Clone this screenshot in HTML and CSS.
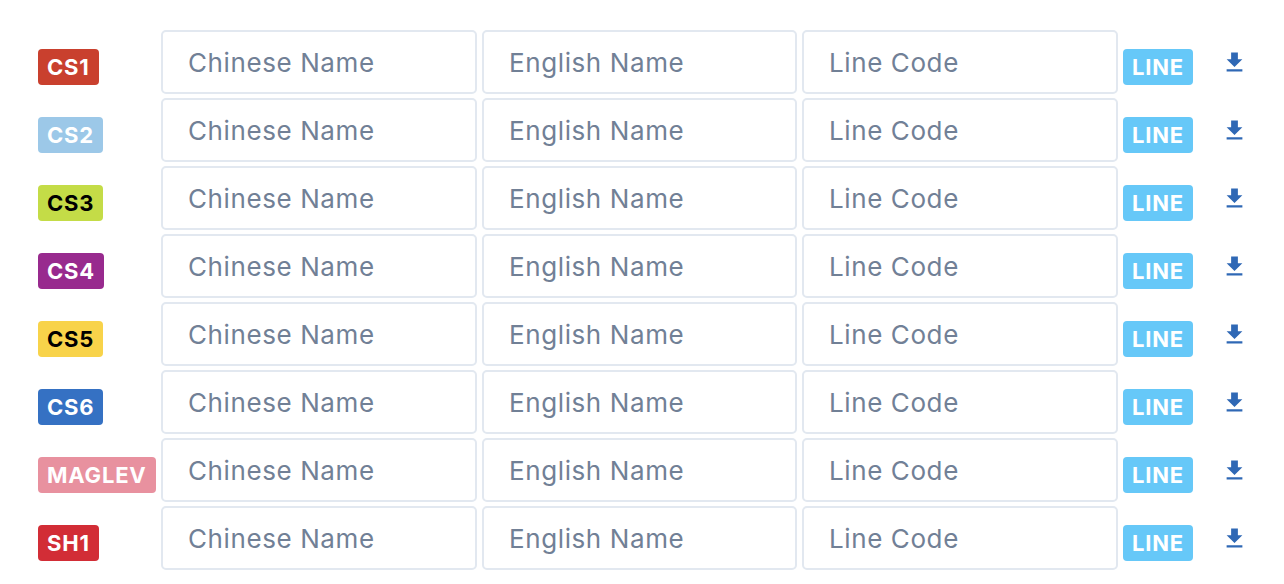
FILE: index.html
```html
<!DOCTYPE html>
<html>
<head>
<meta charset="utf-8">
<link rel="stylesheet" href="styles.css">
</head>
<body>
<div class="list">
  <div class="row">
    <span class="badge b-cs1">CS1</span>
    <div class="field">Chinese Name</div>
    <div class="field">English Name</div>
    <div class="field">Line Code</div>
    <span class="tag">LINE</span>
    <span class="dl"><svg viewBox="0 0 24 24"><path d="M19 9h-4V3H9v6H5l7 7 7-7zM5 18v2h14v-2H5z"/></svg></span>
  </div>
  <div class="row">
    <span class="badge b-cs2">CS2</span>
    <div class="field">Chinese Name</div>
    <div class="field">English Name</div>
    <div class="field">Line Code</div>
    <span class="tag">LINE</span>
    <span class="dl"><svg viewBox="0 0 24 24"><path d="M19 9h-4V3H9v6H5l7 7 7-7zM5 18v2h14v-2H5z"/></svg></span>
  </div>
  <div class="row">
    <span class="badge b-cs3">CS3</span>
    <div class="field">Chinese Name</div>
    <div class="field">English Name</div>
    <div class="field">Line Code</div>
    <span class="tag">LINE</span>
    <span class="dl"><svg viewBox="0 0 24 24"><path d="M19 9h-4V3H9v6H5l7 7 7-7zM5 18v2h14v-2H5z"/></svg></span>
  </div>
  <div class="row">
    <span class="badge b-cs4">CS4</span>
    <div class="field">Chinese Name</div>
    <div class="field">English Name</div>
    <div class="field">Line Code</div>
    <span class="tag">LINE</span>
    <span class="dl"><svg viewBox="0 0 24 24"><path d="M19 9h-4V3H9v6H5l7 7 7-7zM5 18v2h14v-2H5z"/></svg></span>
  </div>
  <div class="row">
    <span class="badge b-cs5">CS5</span>
    <div class="field">Chinese Name</div>
    <div class="field">English Name</div>
    <div class="field">Line Code</div>
    <span class="tag">LINE</span>
    <span class="dl"><svg viewBox="0 0 24 24"><path d="M19 9h-4V3H9v6H5l7 7 7-7zM5 18v2h14v-2H5z"/></svg></span>
  </div>
  <div class="row">
    <span class="badge b-cs6">CS6</span>
    <div class="field">Chinese Name</div>
    <div class="field">English Name</div>
    <div class="field">Line Code</div>
    <span class="tag">LINE</span>
    <span class="dl"><svg viewBox="0 0 24 24"><path d="M19 9h-4V3H9v6H5l7 7 7-7zM5 18v2h14v-2H5z"/></svg></span>
  </div>
  <div class="row">
    <span class="badge b-maglev">MAGLEV</span>
    <div class="field">Chinese Name</div>
    <div class="field">English Name</div>
    <div class="field">Line Code</div>
    <span class="tag">LINE</span>
    <span class="dl"><svg viewBox="0 0 24 24"><path d="M19 9h-4V3H9v6H5l7 7 7-7zM5 18v2h14v-2H5z"/></svg></span>
  </div>
  <div class="row">
    <span class="badge b-sh1">SH1</span>
    <div class="field">Chinese Name</div>
    <div class="field">English Name</div>
    <div class="field">Line Code</div>
    <span class="tag">LINE</span>
    <span class="dl"><svg viewBox="0 0 24 24"><path d="M19 9h-4V3H9v6H5l7 7 7-7zM5 18v2h14v-2H5z"/></svg></span>
  </div>
</div>
</body>
</html>
```
FILE: styles.css
```css
html, body {
  margin: 0;
  padding: 0;
  background: #ffffff;
  font-family: Inter, "Noto Sans", sans-serif;
}
.list {
  padding: 30px 0 0 38px;
  display: grid;
  grid-template-columns: 118px 316px 315px 316px 70px 50px;
  column-gap: 5px;
  row-gap: 4px;
}
.row {
  display: contents;
}
.badge, .tag {
  align-self: end;
  margin-bottom: 9px;
  height: 36px;
  box-sizing: border-box;
  display: inline-flex;
  align-items: center;
  justify-content: center;
  justify-self: start;
  padding: 0 9px;
  border-radius: 4px;
  color: #ffffff;
  font-weight: 700;
  font-size: 22px;
  letter-spacing: 0.8px;
}
.b-cs1 { background: #c9402e; }
.b-cs2 { background: #9cc8e8; }
.b-cs3 { background: #c4dc47; color: #000; }
.b-cs4 { background: #982a8e; }
.b-cs5 { background: #f8d34a; color: #000; }
.b-cs6 { background: #3571c3; }
.b-maglev { background: #e8919f; }
.b-sh1 { background: #d22d36; }
.tag {
  background: #66c8f8;
  width: 70px;
  padding: 0;
}
.field {
  height: 64px;
  box-sizing: border-box;
  border: 2px solid #e2e8f0;
  border-radius: 5px;
  display: flex;
  align-items: center;
  padding-left: 25px;
  font-size: 26px;
  letter-spacing: 0.6px;
  color: #718096;
}
.dl {
  align-self: center;
  justify-self: end;
  display: flex;
  margin-top: 1px;
}
.dl svg {
  width: 27px;
  height: 27px;
  fill: #2f68b5;
}
```
